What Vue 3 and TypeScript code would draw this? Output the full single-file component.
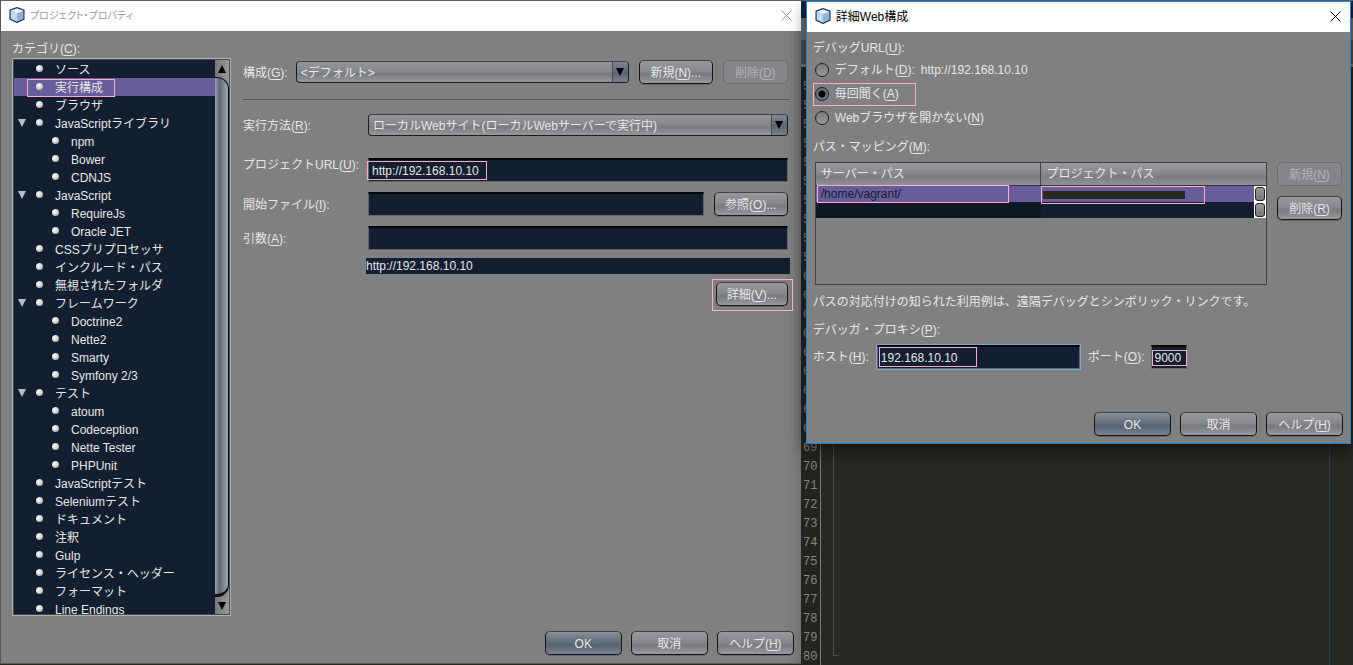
<script setup lang="ts">
import { ref } from 'vue'

interface Node {
  label: string
  depth: number
  open?: boolean
  marked?: boolean
}

const nodes: Node[] = [
  { label: 'ソース', depth: 0 },
  { label: '実行構成', depth: 0, marked: true },
  { label: 'ブラウザ', depth: 0 },
  { label: 'JavaScriptライブラリ', depth: 0, open: true },
  { label: 'npm', depth: 1 },
  { label: 'Bower', depth: 1 },
  { label: 'CDNJS', depth: 1 },
  { label: 'JavaScript', depth: 0, open: true },
  { label: 'RequireJs', depth: 1 },
  { label: 'Oracle JET', depth: 1 },
  { label: 'CSSプリプロセッサ', depth: 0 },
  { label: 'インクルード・パス', depth: 0 },
  { label: '無視されたフォルダ', depth: 0 },
  { label: 'フレームワーク', depth: 0, open: true },
  { label: 'Doctrine2', depth: 1 },
  { label: 'Nette2', depth: 1 },
  { label: 'Smarty', depth: 1 },
  { label: 'Symfony 2/3', depth: 1 },
  { label: 'テスト', depth: 0, open: true },
  { label: 'atoum', depth: 1 },
  { label: 'Codeception', depth: 1 },
  { label: 'Nette Tester', depth: 1 },
  { label: 'PHPUnit', depth: 1 },
  { label: 'JavaScriptテスト', depth: 0 },
  { label: 'Seleniumテスト', depth: 0 },
  { label: 'ドキュメント', depth: 0 },
  { label: '注釈', depth: 0 },
  { label: 'Gulp', depth: 0 },
  { label: 'ライセンス・ヘッダー', depth: 0 },
  { label: 'フォーマット', depth: 0 },
  { label: 'Line Endings', depth: 0 },
]

const lineNumbers = Array.from({ length: 31 }, (_, i) => i + 50)

const selected = ref(1)
const mode = ref('ask')
const projectUrl = ref('http://192.168.10.10')
const startFile = ref('')
const args = ref('')
const host = ref('192.168.10.10')
const port = ref('9000')
</script>

<template>
  <div class="desktop">
    <div class="editor">
      <div class="toolbar"></div>
      <div class="code">
        <div class="numbers"><span v-for="n in lineNumbers" :key="n">{{ n }}</span></div>
        <div class="sheet">
          <div class="fold"></div>
          <div class="margin"></div>
        </div>
      </div>
    </div>

    <div class="windows">
      <section class="window project" aria-label="プロジェクト・プロパティ">
        <header class="titlebar">
          <svg class="cube" viewBox="0 0 16 16" width="16" height="16" aria-hidden="true">
            <path d="M8 .7 14.900 3.2v9L8 15.400 1.100 12.200v-9Z" fill="#a9cbe6" stroke="#27375f" stroke-width="1.300" stroke-linejoin="round" />
            <path d="M8 1.500 14 3.700 8 6.200 2 3.700Z" fill="#e3f2fb" />
            <path d="M1.900 4 7.700 6.400v8L1.900 11.700Z" fill="#bfdcf0" />
            <path d="M8.300 6.400 14.100 4v7.700l-5.800 2.700Z" fill="#8fb2d4" />
          </svg>
          <h1>プロジェクト・プロパティ</h1>
          <button class="close" aria-label="閉じる">
            <svg viewBox="0 0 11 11" width="11" height="11"><path d="M.5.5l10 10M10.500.5l-10 10" stroke="currentColor" fill="none" /></svg>
          </button>
        </header>

        <div class="project-body">
          <div class="category">
            <span class="caption">カテゴリ(<u>C</u>):</span>
            <div class="tree-box">
              <ul class="tree">
                <li v-for="(n, i) in nodes" :key="n.label" :class="{ child: n.depth, selected: selected === i }" @click="selected = i">
                  <button v-if="n.open" class="twist" :aria-label="n.label + 'を折りたたむ'">
                    <svg viewBox="0 0 8 8" width="8" height="8"><path d="M0 0h8L4 8Z" fill="#bdbdbd" /></svg>
                  </button>
                  <i class="dot"></i>
                  <span>{{ n.label }}</span>
                  <em v-if="n.marked" class="mark mark-node"></em>
                </li>
              </ul>
              <div class="scroll" aria-hidden="true">
                <div class="arrow"><svg viewBox="0 0 8 8" width="8" height="8"><path d="M4 0 8 8H0Z" /></svg></div>
                <div class="track"><div class="thumb"></div></div>
                <div class="arrow"><svg viewBox="0 0 8 8" width="8" height="8"><path d="M0 0h8L4 8Z" /></svg></div>
              </div>
            </div>
          </div>

          <div class="settings">
            <div class="config">
              <label for="config">構成(<u>G</u>):</label>
              <div class="combo">
                <select id="config"><option>&lt;デフォルト&gt;</option></select>
                <span class="combo-arrow"><svg viewBox="0 0 8 8" width="8" height="8"><path d="M0 0h8L4 8Z" /></svg></span>
              </div>
              <button class="btn w74">新規(<u>N</u>)...</button>
              <button class="btn w65" disabled>削除(<u>D</u>)</button>
            </div>
            <hr />
            <div class="form">
              <label for="runas">実行方法(<u>R</u>):</label>
              <div class="combo">
                <select id="runas"><option>ローカルWebサイト(ローカルWebサーバーで実行中)</option></select>
                <span class="combo-arrow"><svg viewBox="0 0 8 8" width="8" height="8"><path d="M0 0h8L4 8Z" /></svg></span>
              </div>

              <label for="url">プロジェクトURL(<u>U</u>):</label>
              <div class="field url-field">
                <input id="url" v-model="projectUrl" type="text" />
                <em class="mark mark-url"></em>
              </div>

              <label for="start">開始ファイル(<u>I</u>):</label>
              <div class="field with-button">
                <input id="start" v-model="startFile" type="text" />
                <button class="btn w74">参照(<u>O</u>)...</button>
              </div>

              <label for="args">引数(<u>A</u>):</label>
              <div class="field"><input id="args" v-model="args" type="text" /></div>
            </div>
            <output class="preview">{{ projectUrl }}</output>
            <div class="advanced">
              <button class="btn w72">詳細(<u>V</u>)...<em class="mark mark-advanced"></em></button>
            </div>
          </div>
        </div>

        <footer class="actions">
          <button class="btn w77 primary">OK</button>
          <button class="btn w77">取消</button>
          <button class="btn w77">ヘルプ(<u>H</u>)</button>
        </footer>
      </section>

      <section class="window web" aria-label="詳細Web構成">
        <header class="titlebar">
          <svg class="cube" viewBox="0 0 16 16" width="16" height="16" aria-hidden="true">
            <path d="M8 .7 14.900 3.2v9L8 15.400 1.100 12.200v-9Z" fill="#a9cbe6" stroke="#27375f" stroke-width="1.300" stroke-linejoin="round" />
            <path d="M8 1.500 14 3.700 8 6.200 2 3.700Z" fill="#e3f2fb" />
            <path d="M1.900 4 7.700 6.400v8L1.900 11.700Z" fill="#bfdcf0" />
            <path d="M8.300 6.400 14.100 4v7.700l-5.800 2.700Z" fill="#8fb2d4" />
          </svg>
          <h1>詳細Web構成</h1>
          <button class="close" aria-label="閉じる">
            <svg viewBox="0 0 11 11" width="11" height="11"><path d="M.5.5l10 10M10.500.5l-10 10" stroke="currentColor" fill="none" /></svg>
          </button>
        </header>

        <div class="web-body">
          <span class="caption">デバッグURL(<u>U</u>):</span>
          <div class="radios">
            <div class="radio">
              <input id="r-default" v-model="mode" type="radio" value="default" />
              <label for="r-default">デフォルト(<u>D</u>):</label>
              <span class="hint">http://192.168.10.10</span>
            </div>
            <div class="radio">
              <input id="r-ask" v-model="mode" type="radio" value="ask" />
              <label for="r-ask">毎回聞く(<u>A</u>)</label>
              <em class="mark mark-ask"></em>
            </div>
            <div class="radio">
              <input id="r-none" v-model="mode" type="radio" value="none" />
              <label for="r-none">Webブラウザを開かない(<u>N</u>)</label>
            </div>
          </div>

          <span class="caption mapping-label">パス・マッピング(<u>M</u>):</span>
          <div class="mapping">
            <div class="table-box">
              <table>
                <colgroup><col class="server-col" /><col /><col class="browse-col" /></colgroup>
                <thead>
                  <tr><th>サーバー・パス</th><th colspan="2">プロジェクト・パス</th></tr>
                </thead>
                <tbody>
                  <tr class="picked">
                    <td><div class="cell">/home/vagrant/<em class="mark mark-server"></em></div></td>
                    <td><div class="cell"><i class="redacted"></i><em class="mark mark-path"></em></div></td>
                    <td class="browse"><button aria-label="参照"></button></td>
                  </tr>
                  <tr>
                    <td class="shade"></td>
                    <td></td>
                    <td class="browse"><button aria-label="参照"></button></td>
                  </tr>
                </tbody>
              </table>
            </div>
            <div class="side">
              <button class="btn w65" disabled>新規(<u>N</u>)</button>
              <button class="btn w65">削除(<u>R</u>)</button>
            </div>
          </div>

          <p class="note">パスの対応付けの知られた利用例は、遠隔デバッグとシンボリック・リンクです。</p>
          <span class="caption">デバッガ・プロキシ(<u>P</u>):</span>
          <div class="proxy">
            <label for="host">ホスト(<u>H</u>):</label>
            <div class="field host">
              <input id="host" v-model="host" type="text" />
              <em class="mark mark-host"></em>
            </div>
            <label for="port">ポート(<u>O</u>):</label>
            <div class="field port">
              <input id="port" v-model="port" type="text" />
              <em class="mark mark-port"></em>
            </div>
          </div>
        </div>

        <footer class="actions">
          <button class="btn w77 primary">OK</button>
          <button class="btn w77">取消</button>
          <button class="btn w77">ヘルプ(<u>H</u>)</button>
        </footer>
      </section>
    </div>
  </div>
</template>

<style>
body {
  margin: 0;
  background: #272822;
}
</style>

<style scoped>
* {
  box-sizing: border-box;
}
.desktop {
  --split: 59.2%;
  --navy: #131f31;
  --pink: #ffaec9;
  display: grid;
  min-height: 100vh;
  background: #272822;
  color: #e6e6e6;
  font: 12px/16px "Liberation Sans", "Noto Sans CJK JP", sans-serif;
  overflow: hidden;
}
button,
input,
select {
  font: inherit;
  color: inherit;
  margin: 0;
}
h1,
p,
ul {
  margin: 0;
  padding: 0;
  font-weight: normal;
}
u {
  text-underline-offset: 2px;
}
.editor,
.windows {
  grid-area: 1 / 1;
  min-width: 0;
}

/* editor behind the dialogs */
.editor {
  display: flex;
  flex-direction: column;
  height: 100vh;
  overflow: hidden;
}
.toolbar {
  height: 67px;
  background: linear-gradient(#16233c 18px, #6e6e6e 18px 40px, #4b4d50 40px 64px, #777 64px);
}
.code {
  flex: 1;
  display: flex;
  min-height: 0;
  padding-left: var(--split);
}
.numbers {
  display: flex;
  flex-direction: column;
  width: 19px;
  padding: 11px 0 0 2px;
  color: #85867f;
  font: 12px/19px "Liberation Mono", monospace;
  background: #23241f;
}
.sheet {
  flex: 1;
  display: flex;
  justify-content: space-between;
  border-left: 1px solid #78788a;
  padding: 0 23px 9px 12px;
}
.fold {
  width: 6px;
  border: solid #4c4d46;
  border-width: 0 0 1px 1px;
}
.margin {
  width: 1px;
  margin-bottom: -9px;
  background: #2c3a52;
}

/* dialogs */
.windows {
  display: flex;
  align-items: flex-start;
  gap: 5px;
  padding: 1px 2px 0 0;
  background: linear-gradient(#5d6066, #5d6066) 0 0 / 100% 1px no-repeat;
}
.window {
  display: flex;
  flex-direction: column;
  background: #808080;
  min-width: 0;
}
.project {
  flex: 0 0 calc(var(--split) + 1px);
  min-height: calc(100vh - 2px);
  border-left: 1px solid #55575a;
  border-bottom: 1px solid #55575a;
  box-shadow: inset -14px 0 14px -12px #55555588;
}
.web {
  flex: 1;
  border: 1px solid #1883d7;
  box-shadow: 0 6px 16px #0008;
}
.titlebar {
  display: flex;
  align-items: center;
  height: 30px;
  padding: 0 9px 2px 8px;
  background: #fff;
}
.titlebar h1 {
  flex: 1;
  margin-left: 5px;
  padding-top: 2px;
  font-size: 12px;
  color: #000;
}
.project .titlebar h1 {
  font-size: 10px;
  color: #999;
  font-feature-settings: "palt";
}
.close {
  display: grid;
  border: 0;
  padding: 0;
  background: none;
  color: #000;
}
.project .close {
  color: #999;
}
.caption {
  display: block;
  padding-top: 1px;
}

.project-body {
  flex: 1;
  display: flex;
  gap: 12px;
  min-height: 0;
  padding: 9px 11px 15px;
}
.category {
  flex: 0 0 219px;
  display: flex;
  flex-direction: column;
  gap: 1px;
}
.tree-box {
  flex: 1 1 0;
  display: flex;
  min-height: 0;
  overflow: hidden;
  border: 1px solid #b0b0b0;
  outline: 1px solid #4a4a4a;
  outline-offset: -2px;
  padding: 1px;
}
.tree {
  flex: 1;
  overflow: hidden;
  list-style: none;
  background: var(--navy);
}
.tree li {
  position: relative;
  display: flex;
  align-items: center;
  height: 18px;
  padding: 2px 0 0 22px;
  white-space: nowrap;
}
.tree li.child {
  padding-left: 38px;
}
.tree li.selected {
  background: #695c9d;
}
.twist {
  display: grid;
  width: 18px;
  margin: 0 0 2px -18px;
  border: 0;
  padding: 0;
  background: none;
}
.dot {
  width: 7px;
  height: 7px;
  margin: 0 12px 3px 0;
  border-radius: 50%;
  background: radial-gradient(circle at 35% 35%, #fff, #d8d8d8 45%, #888);
}
.scroll {
  width: 14px;
  display: flex;
  flex-direction: column;
  background: #808080;
}
.arrow {
  display: grid;
  place-items: center;
  height: 17px;
  background: linear-gradient(90deg, #777, #9b9b9d);
}
.track {
  flex: 1;
  display: flex;
  background: linear-gradient(90deg, #666, #999);
}
.thumb {
  flex: 1;
  border: solid #0c0c0c;
  border-width: 1px 1px 3px 0;
  border-radius: 0 12px 12px 0;
  background: linear-gradient(90deg, #9aa0aa, #5d6778 35%, #8b93a3 80%, #a2a9b6);
}

.settings {
  flex: 1;
  min-width: 0;
  padding-top: 20px;
}
.config {
  display: flex;
  align-items: center;
  padding-right: 2px;
}
.config .combo {
  flex: 1;
  margin: 0 10px 0 8px;
}
.config .btn + .btn {
  margin-left: 10px;
}
hr {
  height: 1px;
  margin: 15px 0 14px;
  border: 0;
  background: #555;
}
.form {
  display: grid;
  grid-template-columns: 117px 1fr;
  column-gap: 8px;
  row-gap: 10px;
  align-items: center;
  padding-right: 2px;
}
.form label,
.config label {
  padding-top: 2px;
  white-space: nowrap;
}
.url-field {
  margin-top: 12px;
}
.combo {
  position: relative;
  display: flex;
  min-width: 0;
}
.combo select {
  appearance: none;
  flex: 1;
  min-width: 0;
  height: 22px;
  padding: 2px 22px 0 4px;
  border: 1px solid #1c1c1c;
  border-top-color: #444;
  border-radius: 4px;
  background: linear-gradient(#94959a, #86878a 50%, #7a7b7e 60%, #97989b);
}
.combo-arrow {
  position: absolute;
  inset: 1px 1px 1px auto;
  display: grid;
  place-items: center;
  width: 16px;
  border-left: 1px solid #444b57;
  border-radius: 0 3px 3px 0;
  background: linear-gradient(#7d8795, #5a6574 55%, #77818f);
  pointer-events: none;
}
.field {
  position: relative;
  display: flex;
  min-width: 0;
}
.field input {
  flex: 1;
  min-width: 0;
  width: 100%;
  height: 24px;
  padding: 0 3px;
  border: 1px solid #666;
  border-top: 2px solid #050505;
  border-radius: 0;
  outline: 0;
  background: var(--navy);
}
.with-button {
  gap: 10px;
}
.preview {
  display: block;
  margin: 8px 0 8px 123px;
  background: var(--navy);
}
.advanced {
  display: flex;
  justify-content: flex-end;
  padding-right: 2px;
}
.btn {
  position: relative;
  flex: none;
  height: 24px;
  padding: 2px 0 0;
  border: 1px solid #161616;
  border-top-color: #444;
  border-radius: 5px;
  background: linear-gradient(#97989b, #88898c 45%, #7a7b7f 60%, #98999e);
  box-shadow: 0 1px 0 #666;
  white-space: nowrap;
}
.btn:disabled {
  border-color: #6c6e72;
  background: #85868a;
  box-shadow: none;
  color: #b2b2b4;
}
.btn.primary {
  background: linear-gradient(#8b9099, #5f6978 50%, #586372 60%, #788294);
}
.w65 {
  width: 65px;
}
.w72 {
  width: 72px;
}
.w74 {
  width: 74px;
}
.w77 {
  width: 77px;
}
.actions {
  display: flex;
  justify-content: flex-end;
  gap: 9px;
  padding: 0 7px 7px;
}
.project .actions {
  padding-bottom: 8px;
}

/* pink call-outs drawn over the controls */
.mark {
  position: absolute;
  border: 1px solid var(--pink);
  pointer-events: none;
}
.mark-node {
  inset: 1px auto -1px 13px;
  width: 88px;
}
.mark-url {
  inset: 3px auto 2px -1px;
  width: 120px;
}
.mark-advanced {
  inset: -4px -6px -6px -5px;
}
.mark-ask {
  inset: 1px auto 0 0;
  width: 103px;
}
.mark-server {
  inset: -1px 32px -1px 1px;
}
.mark-path {
  inset: 0 auto -2px 0;
  width: 164px;
}
.mark-host {
  inset: 2px auto 2px 2px;
  width: 98px;
}
.mark-port {
  inset: 5px 0 3px 1px;
}

/* web configuration */
.web-body {
  padding: 7px 8px 0 6px;
}
.radios {
  margin: 2px 0 3px;
}
.radio {
  position: relative;
  display: flex;
  align-items: center;
  height: 24px;
}
.radio input {
  appearance: none;
  width: 14px;
  height: 14px;
  margin: 0 6px 0 2px;
  border: 1px solid #1e1e1e;
  border-radius: 50%;
  background: linear-gradient(#7a7b7e, #97989b);
}
.radio input:checked {
  background: radial-gradient(circle, #000 3px, #66707e 4px);
}
.hint {
  margin-left: 6px;
}
.mapping-label {
  margin-top: 8px;
}
.mapping {
  display: flex;
  gap: 10px;
  margin: 7px 0 8px 2px;
}
.table-box {
  flex: 1;
  min-width: 0;
  height: 123px;
  border: 1px solid #414246;
}
table {
  width: 100%;
  table-layout: fixed;
  border-collapse: collapse;
}
.server-col {
  width: 50%;
}
.browse-col {
  width: 12px;
}
th,
td {
  padding: 0;
  text-align: left;
  font-weight: normal;
}
th {
  height: 22px;
  padding-left: 5px;
  border-bottom: 1px solid #333;
  background: linear-gradient(#999a9d, #86878a 50%, #7c7d81 60%, #8f9093);
}
th + th {
  border-left: 1px solid #414246;
}
td {
  height: 16px;
  background: var(--navy);
}
.shade {
  background: #0d1725;
}
.picked td {
  background: #695c9d;
}
.cell {
  position: relative;
  height: 16px;
  padding-left: 5px;
  color: #131f31;
}
.cell:has(.redacted) {
  display: flow-root;
}
.redacted {
  display: block;
  width: 142px;
  height: 8px;
  margin: 5px 0 0 -3px;
  background: #272822;
}
td.browse {
  background: #fff;
}
.browse button {
  display: block;
  width: 10px;
  height: 14px;
  margin: 0 auto;
  padding: 0;
  border: 1px solid #222;
  border-radius: 3px;
  background: linear-gradient(#999, #777);
}
.side {
  display: flex;
  flex-direction: column;
  gap: 10px;
}
.note {
  margin-bottom: 11px;
  padding-top: 1px;
}
.proxy {
  display: flex;
  align-items: center;
  gap: 7px;
  margin: 6px 0 42px;
}
.host {
  flex: 0 1 205px;
  border: 1px solid #6fa8e0;
}
.port {
  width: 36px;
}
.port input {
  padding: 0 2px;
}
</style>
